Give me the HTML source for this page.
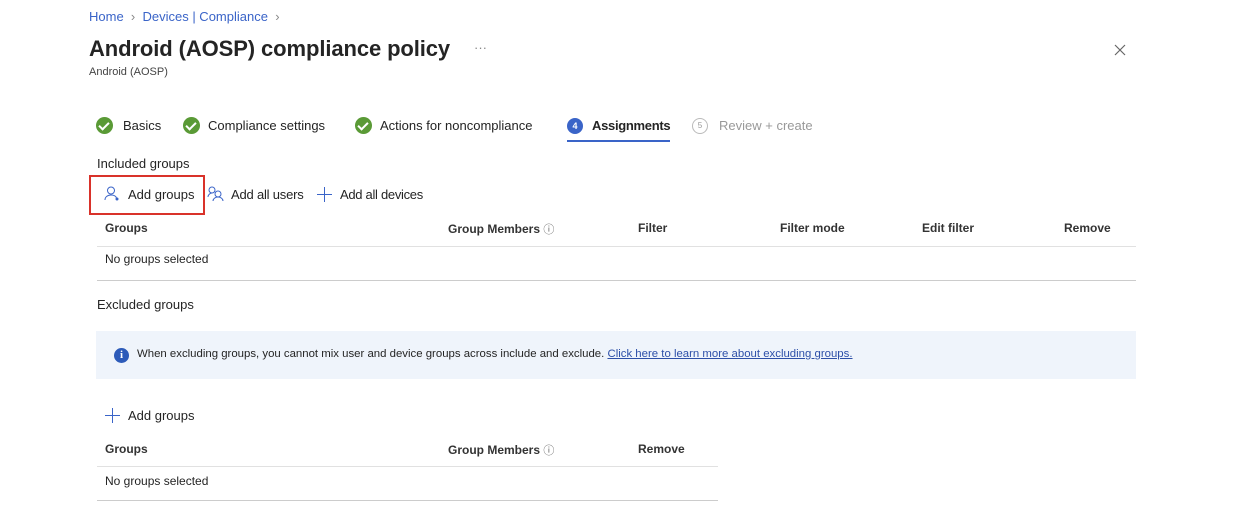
<!DOCTYPE html>
<html><head><meta charset="utf-8"><style>
body{margin:0;width:1251px;height:520px;background:#fff;font-family:"Liberation Sans",sans-serif;color:#242424;position:relative;overflow:hidden}
.a{position:absolute;white-space:nowrap}
.t{font-size:13px;line-height:16px}
.h{font-size:12px;font-weight:bold;line-height:14px;color:#333}
.line{position:absolute;height:1px;background:#e1e1e1}
.chk{position:absolute;width:17px;height:17px;border-radius:50%;background:#5a9a36}
.chk:after{content:"";position:absolute;left:5px;top:3px;width:4px;height:8px;border:solid #fff;border-width:0 2px 2px 0;transform:rotate(45deg)}
</style></head><body>
<div class="a t" style="left:89px;top:9px;color:#3a64c8">Home <span style="color:#888">&nbsp;›&nbsp;</span> Devices | Compliance <span style="color:#888">&nbsp;›</span></div>
<div class="a" style="left:89px;top:36px;font-size:22px;font-weight:bold;letter-spacing:-0.1px;line-height:26px">Android (AOSP) compliance policy</div>
<div class="a" style="left:474px;top:40px;color:#888;font-size:13px">···</div>
<svg class="a" style="left:1114px;top:44px" width="12" height="12"><path d="M1 1L11 11M11 1L1 11" stroke="#666" stroke-width="1.2"/></svg>
<div class="a" style="left:89px;top:66px;font-size:11px;color:#444">Android (AOSP)</div>

<div class="chk" style="left:96px;top:117px"></div><div class="a t" style="left:123px;top:118px">Basics</div>
<div class="chk" style="left:183px;top:117px"></div><div class="a t" style="left:208px;top:118px">Compliance settings</div>
<div class="chk" style="left:355px;top:117px"></div><div class="a t" style="left:380px;top:118px">Actions for noncompliance</div>
<div class="a" style="left:567px;top:118px;width:16px;height:16px;border-radius:50%;background:#3a64c8;color:#fff;font-size:9px;font-weight:bold;text-align:center;line-height:16px">4</div>
<div class="a t" style="left:592px;top:118px;font-weight:bold;letter-spacing:-0.3px">Assignments</div>
<div class="a" style="left:567px;top:140px;width:103px;height:2px;background:#3a64c8"></div>
<div class="a" style="left:692px;top:118px;width:14px;height:14px;border-radius:50%;border:1px solid #bbb;color:#999;font-size:8px;text-align:center;line-height:14px">5</div>
<div class="a t" style="left:719px;top:118px;color:#999">Review + create</div>

<div class="a t" style="left:97px;top:156px">Included groups</div>
<div class="a" style="left:89px;top:175px;width:112px;height:36px;border:2px solid #d9322a"></div>
<svg class="a" style="left:104px;top:186px" width="16" height="16" fill="none" stroke="#3a64c8" stroke-width="1"><circle cx="7" cy="4.5" r="3.5"/><path d="M1 14c0-3 2.5-5 6-5s5 1.5 5.5 3"/><circle cx="13" cy="13" r="1" fill="#3a64c8"/></svg>
<div class="a t" style="left:128px;top:187px">Add groups</div>
<svg class="a" style="left:207px;top:186px" width="18" height="16" fill="none" stroke="#3a64c8" stroke-width="1"><circle cx="5" cy="4" r="3"/><path d="M1 11c0-2 2-4 4-4"/><circle cx="11" cy="8" r="3"/><path d="M6 15c0-2 2-4 5-4s5 2 5 4"/></svg>
<div class="a t" style="left:231px;top:187px;letter-spacing:-0.2px">Add all users</div>
<svg class="a" style="left:317px;top:187px" width="15" height="15"><path d="M7.5 0V15M0 7.5H15" stroke="#3a64c8" stroke-width="1"/></svg>
<div class="a t" style="left:340px;top:187px;letter-spacing:-0.3px">Add all devices</div>

<div class="a h" style="left:105px;top:221px">Groups</div>
<div class="a h" style="left:448px;top:222px">Group Members <span style="font-weight:normal;font-size:11px;color:#666">ⓘ</span></div>
<div class="a h" style="left:638px;top:221px">Filter</div>
<div class="a h" style="left:780px;top:221px">Filter mode</div>
<div class="a h" style="left:922px;top:221px">Edit filter</div>
<div class="a h" style="left:1064px;top:221px">Remove</div>
<div class="line" style="left:97px;top:246px;width:1039px"></div>
<div class="a" style="left:105px;top:252px;font-size:12px">No groups selected</div>
<div class="line" style="left:97px;top:280px;width:1039px;background:#ccc"></div>

<div class="a t" style="left:97px;top:297px">Excluded groups</div>
<div class="a" style="left:96px;top:331px;width:1040px;height:48px;background:#eff4fb"></div>
<div class="a" style="left:114px;top:348px;width:15px;height:15px;border-radius:50%;background:#2d5bb9;color:#fff;font-size:11px;font-weight:bold;text-align:center;line-height:15px;font-family:'Liberation Serif',serif">i</div>
<div class="a" style="left:137px;top:348px;font-size:11.4px">When excluding groups, you cannot mix user and device groups across include and exclude. <span style="color:#2d4fa8;text-decoration:underline">Click here to learn more about excluding groups.</span></div>

<svg class="a" style="left:105px;top:408px" width="15" height="15"><path d="M7.5 0V15M0 7.5H15" stroke="#3a64c8" stroke-width="1"/></svg>
<div class="a t" style="left:128px;top:408px">Add groups</div>
<div class="a h" style="left:105px;top:442px">Groups</div>
<div class="a h" style="left:448px;top:443px">Group Members <span style="font-weight:normal;font-size:11px;color:#666">ⓘ</span></div>
<div class="a h" style="left:638px;top:442px">Remove</div>
<div class="line" style="left:97px;top:466px;width:621px"></div>
<div class="a" style="left:105px;top:474px;font-size:12px">No groups selected</div>
<div class="line" style="left:97px;top:500px;width:621px;background:#ccc"></div>
</body></html>
